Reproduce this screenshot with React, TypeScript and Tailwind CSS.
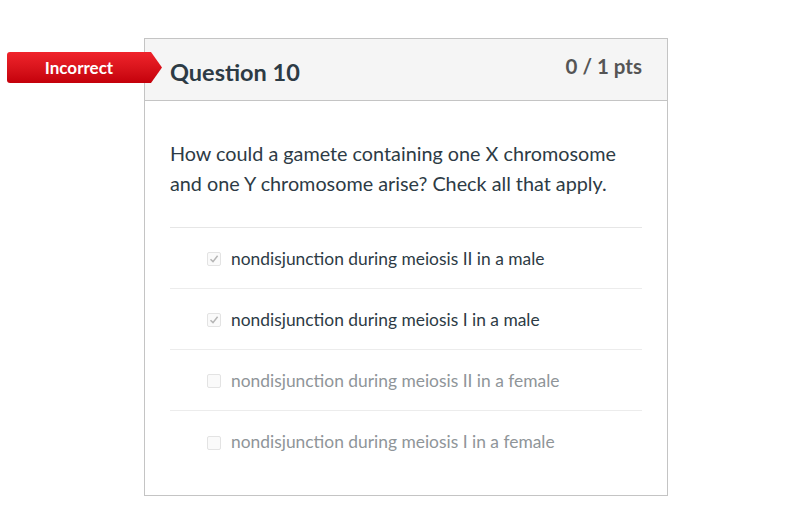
import React from "react";

const answers = [
  { text: "nondisjunction during meiosis II in a male", checked: true },
  { text: "nondisjunction during meiosis I in a male", checked: true },
  { text: "nondisjunction during meiosis II in a female", checked: false },
  { text: "nondisjunction during meiosis I in a female", checked: false },
];

function Box({ checked }: { checked: boolean }) {
  return (
    <span className="w-[14px] h-[14px] rounded-[2px] border border-[#e3e3e3] bg-[#fafafa] flex items-center justify-center shrink-0">
      {checked && (
        <svg width="10" height="10" viewBox="0 0 10 10">
          <path d="M1.5 5.2 L4 7.6 L8.6 1.8" fill="none" stroke="#b5b5b5" strokeWidth="1.5" />
        </svg>
      )}
    </span>
  );
}

export default function App() {
  return (
    <div className="w-[799px] h-[532px] bg-white relative" style={{ fontFamily: "Lato, 'Open Sans', sans-serif" }}>
      <div className="pt-[38px] pl-[144px]">
        <div className="w-[524px] h-[458px] border border-[#c4c4c4] flex flex-col">
          <div className="h-[62px] bg-[#f5f5f5] border-b border-[#c4c4c4] flex justify-between pl-[25px] pr-[25px]">
            <div className="pt-[17px] text-[23.5px] font-bold text-[#2d3b45] leading-[32px]">Question 10</div>
            <div className="pt-[14px] text-[20.5px] font-bold text-[#555] leading-[26px]">0 / 1 pts</div>
          </div>
          <div className="px-[25px] pt-[37px]">
            <div className="text-[19.8px] text-[#2d3b45] leading-[30px]">
              How could a gamete containing one X chromosome
              <br />
              and one Y chromosome arise? Check all that apply.
            </div>
            <div className="mt-[29px] border-t border-[#e6e6e6]">
              {answers.map((a, i) => (
                <div
                  key={i}
                  className={`h-[61px] pt-[2px] flex items-center pl-[37px] gap-[10px] ${i < answers.length - 1 ? "border-b border-[#ececec]" : ""}`}
                >
                  <Box checked={a.checked} />
                  <span className={`text-[17.4px] ${a.checked ? "text-[#2d3b45]" : "text-[#8f9599]"}`}>{a.text}</span>
                </div>
              ))}
            </div>
          </div>
        </div>
      </div>
      <div className="absolute left-[7px] top-[52px] h-[31px] flex">
        <div className="w-[144px] h-[31px] rounded-l-[3px] bg-gradient-to-b from-[#f0232b] to-[#c4000a] flex items-center justify-center text-white font-bold text-[17px]">
          Incorrect
        </div>
        <svg width="12" height="31" viewBox="0 0 12 31" className="-ml-px">
          <defs>
            <linearGradient id="g" x1="0" y1="0" x2="0" y2="1">
              <stop offset="0" stopColor="#f0232b" />
              <stop offset="1" stopColor="#c4000a" />
            </linearGradient>
          </defs>
          <path d="M0 0 L1 0 L12 15.5 L1 31 L0 31 Z" fill="url(#g)" />
        </svg>
      </div>
    </div>
  );
}
